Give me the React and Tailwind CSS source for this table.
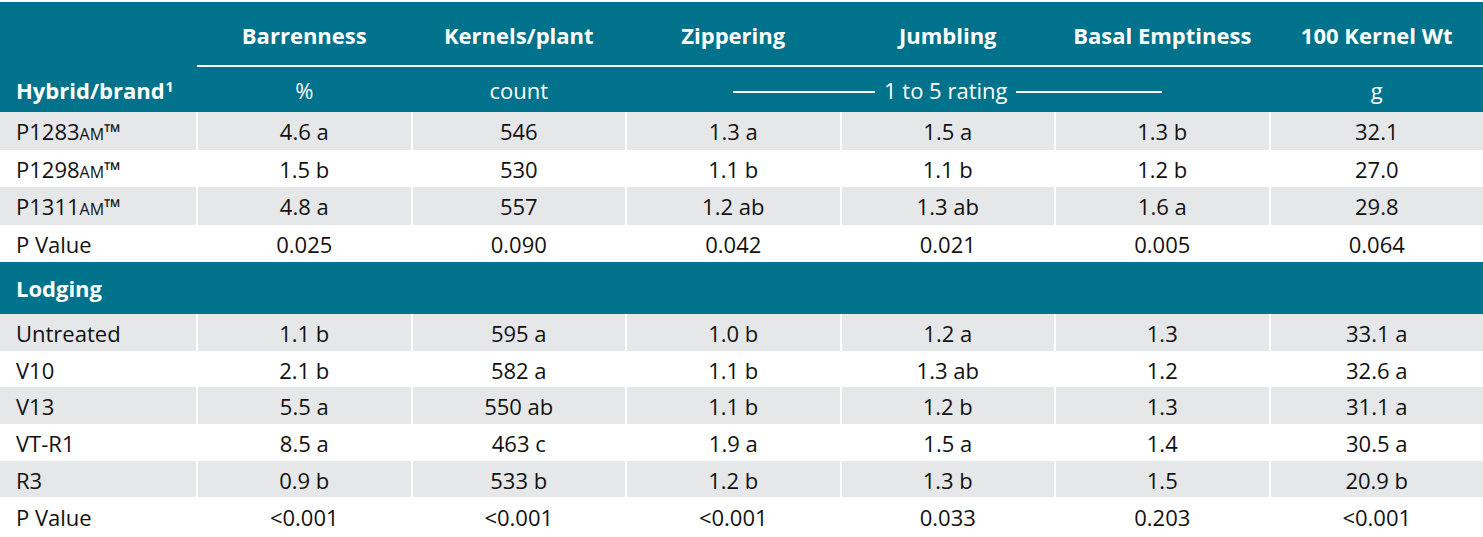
const cols = ["Barrenness", "Kernels/plant", "Zippering", "Jumbling", "Basal Emptiness", "100 Kernel Wt"];

const hybrids = [
  { name: "P1283", vals: ["4.6 a", "546", "1.3 a", "1.5 a", "1.3 b", "32.1"] },
  { name: "P1298", vals: ["1.5 b", "530", "1.1 b", "1.1 b", "1.2 b", "27.0"] },
  { name: "P1311", vals: ["4.8 a", "557", "1.2 ab", "1.3 ab", "1.6 a", "29.8"] },
];

const lodging = [
  { name: "Untreated", vals: ["1.1 b", "595 a", "1.0 b", "1.2 a", "1.3", "33.1 a"] },
  { name: "V10", vals: ["2.1 b", "582 a", "1.1 b", "1.3 ab", "1.2", "32.6 a"] },
  { name: "V13", vals: ["5.5 a", "550 ab", "1.1 b", "1.2 b", "1.3", "31.1 a"] },
  { name: "VT-R1", vals: ["8.5 a", "463 c", "1.9 a", "1.5 a", "1.4", "30.5 a"] },
  { name: "R3", vals: ["0.9 b", "533 b", "1.2 b", "1.3 b", "1.5", "20.9 b"] },
];

const grid = "grid grid-cols-[196px_repeat(6,1fr)] gap-x-[2px]";

function Row({ label, vals, shaded, h = "h-[37px]" }) {
  const bg = shaded ? "bg-[#e6e7e9]" : "bg-white";
  return (
    <div className={`${grid} ${h}`}>
      <div className={`${bg} flex items-center pl-4 pt-[2px]`}>{label}</div>
      {vals.map((v, i) => (
        <div key={i} className={`${bg} flex items-center justify-center pt-[2px]`}>
          {v}
        </div>
      ))}
    </div>
  );
}

const Brand = ({ name }) => (
  <span>
    {name}
    <span className="text-[16px]">AM</span>™
  </span>
);

export default function App() {
  return (
    <div className="w-[1483px] bg-white pt-[2px] text-[22px] text-[#111] font-['Open_Sans','Noto_Sans',sans-serif]">
      {/* Header */}
      <div className="bg-[#00728b] text-white">
        <div className={`${grid} h-[63px] font-bold`}>
          <div />
          {cols.map((c) => (
            <div key={c} className="flex items-center justify-center pt-[4px]">
              {c}
            </div>
          ))}
        </div>
        <div className="ml-[197px] h-[2px] bg-white" />
        <div className={`${grid} h-[45px]`}>
          <div className="flex items-center pl-4 font-bold pt-[2px]">
            Hybrid/brand<span className="text-[14px] -mt-[8px] ml-[1px]">1</span>
          </div>
          <div className="flex items-center justify-center pt-[2px]">%</div>
          <div className="flex items-center justify-center pt-[2px]">count</div>
          <div className="col-span-3 flex items-center justify-center gap-[9px] pt-[2px]">
            <div className="w-[142px] h-[2px] bg-white mt-[3px]" />
            <span>1 to 5 rating</span>
            <div className="w-[146px] h-[2px] bg-white mt-[3px]" />
          </div>
          <div className="flex items-center justify-center pt-[2px]">g</div>
        </div>
      </div>

      {hybrids.map((r, i) => (
        <Row key={r.name} label={<Brand name={r.name} />} vals={r.vals} shaded={i % 2 === 0} h="h-[37.5px]" />
      ))}
      <Row label="P Value" vals={["0.025", "0.090", "0.042", "0.021", "0.005", "0.064"]} h="h-[37.5px]" />

      <div className="bg-[#00728b] text-white font-bold h-[52px] flex items-center pl-4">Lodging</div>

      {lodging.map((r, i) => (
        <Row key={r.name} label={r.name} vals={r.vals} shaded={i % 2 === 0} h="h-[36.7px]" />
      ))}
      <Row label="P Value" vals={["<0.001", "<0.001", "<0.001", "0.033", "0.203", "<0.001"]} h="h-[39px]" />
    </div>
  );
}
